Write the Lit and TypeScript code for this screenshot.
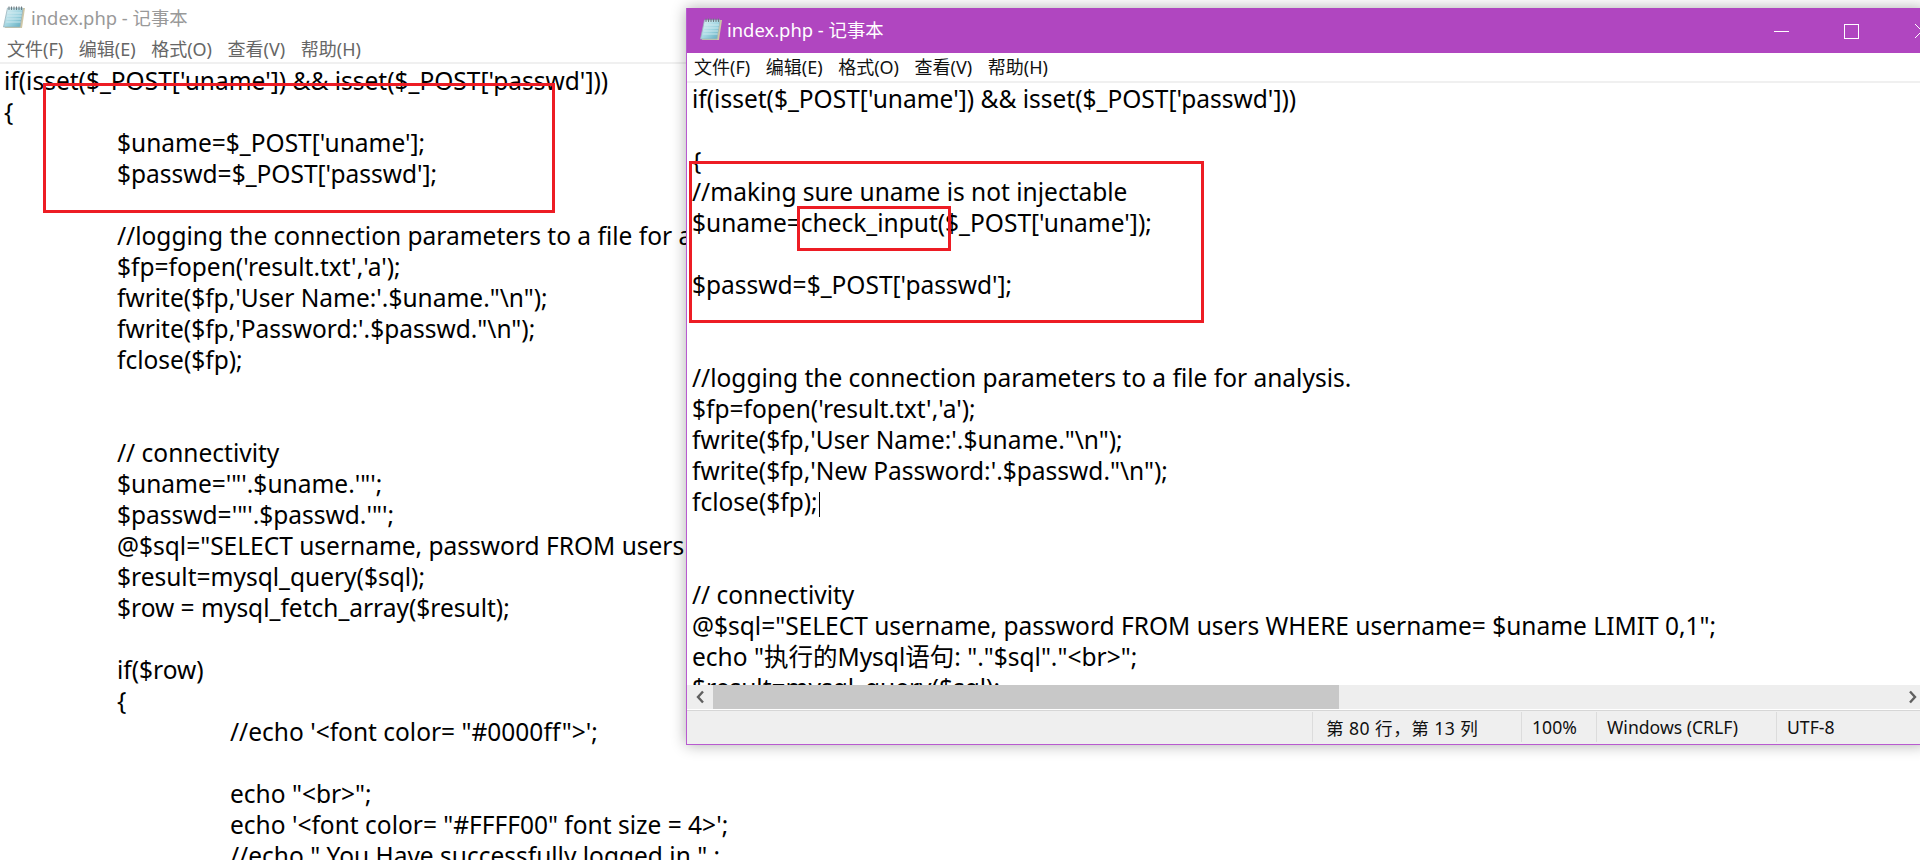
import { LitElement, html, css } from "lit";
import { customElement } from "lit/decorators.js";

const LEFT = [
  `if(isset($_POST['uname']) && isset($_POST['passwd']))`,
  `{`,
  `\t$uname=$_POST['uname'];`,
  `\t$passwd=$_POST['passwd'];`,
  ``,
  `\t//logging the connection parameters to a file for analysis.`,
  `\t$fp=fopen('result.txt','a');`,
  `\tfwrite($fp,'User Name:'.$uname."\\n");`,
  `\tfwrite($fp,'Password:'.$passwd."\\n");`,
  `\tfclose($fp);`,
  ``,
  ``,
  `\t// connectivity`,
  `\t$uname='"'.$uname.'"';`,
  `\t$passwd='"'.$passwd.'"';`,
  `\t@$sql="SELECT username, password FROM users WHERE username=($uname) AND password=($passwd) LIMIT 0,1";`,
  `\t$result=mysql_query($sql);`,
  `\t$row = mysql_fetch_array($result);`,
  ``,
  `\tif($row)`,
  `\t{`,
  `\t\t//echo '<font color= "#0000ff">';`,
  ``,
  `\t\techo "<br>";`,
  `\t\techo '<font color= "#FFFF00" font size = 4>';`,
  `\t\t//echo " You Have successfully logged in " ;`,
];

const RIGHT = [
  `if(isset($_POST['uname']) && isset($_POST['passwd']))`,
  ``,
  `{`,
  `//making sure uname is not injectable`,
  `$uname=check_input($_POST['uname']);`,
  ``,
  `$passwd=$_POST['passwd'];`,
  ``,
  ``,
  `//logging the connection parameters to a file for analysis.`,
  `$fp=fopen('result.txt','a');`,
  `fwrite($fp,'User Name:'.$uname."\\n");`,
  `fwrite($fp,'New Password:'.$passwd."\\n");`,
  `fclose($fp);`,
  ``,
  ``,
  `// connectivity`,
  `@$sql="SELECT username, password FROM users WHERE username= $uname LIMIT 0,1";`,
  `echo "执行的Mysql语句: "."$sql"."<br>";`,
  `$result=mysql_query($sql);`,
];

const MENU = ["文件(F)", "编辑(E)", "格式(O)", "查看(V)", "帮助(H)"];

const icon = html`<svg class="icon" viewBox="0 0 22 24" aria-hidden="true">
  <defs>
    <linearGradient id="pg" x1="0" y1="0" x2="1" y2="1">
      <stop offset="0" stop-color="#e4f4f7" />
      <stop offset="0.55" stop-color="#9fd4e0" />
      <stop offset="1" stop-color="#5aa9bd" />
    </linearGradient>
  </defs>
  <path d="M6 3 H22 L19 23 H2 Z" fill="#cfc7a6" />
  <path d="M4.5 3 H20 L17 22 H0.5 Z" fill="url(#pg)" stroke="#9ab4bc" stroke-width="0.8" />
  <path d="M4.5 8 H19 M4 11 H18.6 M3.6 14 H18 M3.2 17 H17.6" stroke="#d8eef3" stroke-width="0.8" />
  <path d="M6 1.5 V5 M8.5 1.5 V5 M11 1.5 V5 M13.5 1.5 V5 M16 1.5 V5 M18.5 1.5 V5" stroke="#6d7a80" stroke-width="1" />
</svg>`;

@customElement("app-root")
export class AppRoot extends LitElement {
  static styles = css`
    :host {
      display: block;
      position: relative;
      width: 1920px;
      height: 860px;
      overflow: hidden;
      background: #fff;
      font-family: "Noto Sans", "Noto Sans CJK SC", sans-serif;
    }
    .back {
      display: flex;
      flex-direction: column;
      height: 860px;
      overflow: hidden;
    }
    .title {
      display: flex;
      align-items: center;
      flex: none;
      font-size: 18.4px;
      white-space: nowrap;
    }
    .back .title {
      height: 34px;
      padding-left: 3px;
      padding-bottom: 1px;
      box-sizing: border-box;
      gap: 6px;
      color: #999;
    }
    .icon {
      width: 22px;
      height: 24px;
      flex: none;
    }
    .menu {
      display: flex;
      align-items: center;
      flex: none;
      gap: 15.6px;
      font-size: 18px;
      white-space: nowrap;
    }
    .back .menu {
      height: 28px;
      padding-left: 7px;
      color: #666;
    }
    .rule {
      flex: none;
      height: 2px;
      background: #f0f0f0;
    }
    .code {
      font-size: 24.5px;
      line-height: 31px;
      white-space: pre;
      tab-size: 113px;
      color: #000;
    }
    .back .code {
      padding: 1px 0 0 4px;
    }
    .win {
      position: absolute;
      left: 686px;
      top: 8px;
      width: 1240px;
      height: 737px;
      box-sizing: border-box;
      display: flex;
      flex-direction: column;
      background: #fff;
      border-left: 1px solid #b85ad0;
      border-bottom: 1px solid #b85ad0;
      box-shadow: 0 0 14px rgba(0, 0, 0, 0.32);
    }
    .win .title {
      height: 45px;
      background: #b046c0;
      color: #fff;
      padding-left: 13px;
      padding-bottom: 4px;
      box-sizing: border-box;
      gap: 5px;
    }
    .caps {
      display: flex;
      align-items: center;
      position: absolute;
      left: 1087px;
      top: 15px;
      gap: 55px;
    }
    .cap-min {
      width: 15px;
      height: 1px;
      background: #fff;
    }
    .cap-max {
      width: 13px;
      height: 13px;
      border: 1px solid #fff;
    }
    .cap-close {
      width: 16px;
      height: 16px;
    }
    .win .menu {
      height: 28px;
      padding-left: 7px;
      padding-bottom: 2px;
      box-sizing: border-box;
      color: #111;
    }
    .win .code {
      flex: 1;
      min-height: 0;
      overflow: hidden;
      padding: 0 0 0 5px;
    }
    .caret {
      display: inline-block;
      width: 1px;
      height: 25px;
      margin-left: 1px;
      vertical-align: -6px;
      background: #000;
    }
    .sb {
      display: flex;
      flex: none;
      height: 24px;
      background: #eeeeee;
    }
    .sb-btn {
      width: 26px;
      flex: none;
      display: flex;
      align-items: center;
      justify-content: center;
    }
    .sb-btn svg {
      width: 10px;
      height: 14px;
    }
    .sb-thumb {
      width: 626px;
      flex: none;
      background: #c8c8c8;
    }
    .sb-track {
      flex: 1;
    }
    .sb-end {
      position: absolute;
      left: 1221px;
      top: 677px;
      width: 12px;
      height: 24px;
      display: flex;
      align-items: center;
    }
    .sb-end svg {
      width: 10px;
      height: 14px;
    }
    .status {
      display: flex;
      flex: none;
      height: 34px;
      box-sizing: border-box;
      background: #efefef;
      border-top: 1px solid #d6d6d6;
      margin-top: 1px;
      padding: 1px 0 2px 625px;
      font-size: 17.6px;
      color: #111;
      white-space: nowrap;
    }
    .cell {
      display: flex;
      align-items: center;
      box-sizing: border-box;
      border-left: 1px solid #dcdcdc;
      padding-left: 10px;
      flex: none;
    }
    .c1 {
      width: 209px;
      padding-left: 13px;
      letter-spacing: 0.45px;
    }
    .c2 {
      width: 75px;
    }
    .c3 {
      width: 180px;
    }
    .c4 {
      width: 140px;
    }
    .mark {
      position: absolute;
      box-sizing: border-box;
      border: 3px solid #ed1c24;
      pointer-events: none;
    }
    .m1 {
      left: 43px;
      top: 83px;
      width: 512px;
      height: 130px;
    }
    .m2 {
      left: 689px;
      top: 161px;
      width: 515px;
      height: 162px;
    }
    .m3 {
      left: 797px;
      top: 206px;
      width: 154px;
      height: 45px;
    }
  `;

  private lines(rows: string[], caretAt = -1) {
    return rows.map(
      (r, i) =>
        html`<div>${r || " "}${i === caretAt ? html`<span class="caret"></span>` : ""}</div>`
    );
  }

  private menu() {
    return html`<div class="menu">${MENU.map((m) => html`<span>${m}</span>`)}</div>`;
  }

  render() {
    return html`
      <div class="back">
        <div class="title">${icon}<span>index.php - 记事本</span></div>
        ${this.menu()}
        <div class="rule"></div>
        <div class="code">${this.lines(LEFT)}</div>
      </div>
      <div class="win">
        <div class="title">${icon}<span>index.php - 记事本</span></div>
        <div class="caps">
          <span class="cap-min"></span><span class="cap-max"></span>
          <svg class="cap-close" viewBox="0 0 16 16"><path d="M1 1 L15 15 M15 1 L1 15" stroke="#fff" stroke-width="1" fill="none" /></svg>
        </div>
        ${this.menu()}
        <div class="rule"></div>
        <div class="code">${this.lines(RIGHT, 13)}</div>
        <div class="sb">
          <div class="sb-btn">
            <svg viewBox="0 0 10 14"><path d="M8 1.5 L3 7 L8 12.5" stroke="#606060" stroke-width="2.4" fill="none" /></svg>
          </div>
          <div class="sb-thumb"></div>
          <div class="sb-track"></div>
        </div>
        <div class="sb-end">
          <svg viewBox="0 0 10 14"><path d="M2 1.5 L7 7 L2 12.5" stroke="#606060" stroke-width="2.4" fill="none" /></svg>
        </div>
        <div class="status">
          <div class="cell c1">第 80 行，第 13 列</div>
          <div class="cell c2">100%</div>
          <div class="cell c3">Windows (CRLF)</div>
          <div class="cell c4">UTF-8</div>
        </div>
      </div>
      <div class="mark m1"></div>
      <div class="mark m2"></div>
      <div class="mark m3"></div>
    `;
  }
}
